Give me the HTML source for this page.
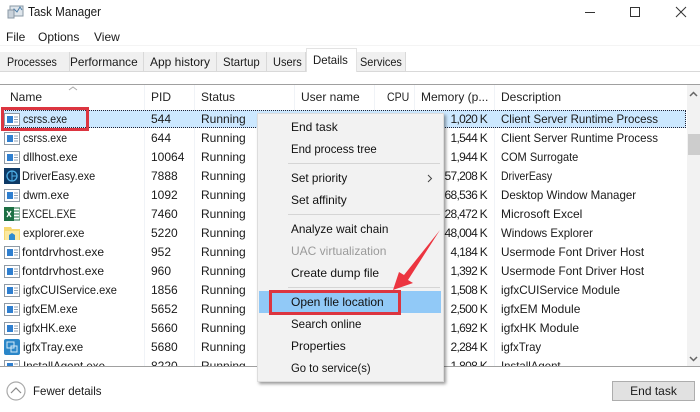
<!DOCTYPE html>
<html><head><meta charset="utf-8">
<style>
html,body{margin:0;padding:0;background:#fff}
#p{position:relative;width:700px;height:412px;overflow:hidden;background:#fff;font:12px "Liberation Sans",sans-serif;color:#1a1a1a}
#p div{position:absolute;white-space:nowrap;transform-origin:left center}
.t{line-height:16px;height:16px}
.tab{top:52px;height:19px;background:#f0f0f0;border-right:1px solid #d9d9d9;box-sizing:border-box}
.tl{top:54px;line-height:16px;height:16px}
.h{top:85px;height:24px;line-height:24px;color:#222}
.sep{top:85px;height:281px;width:1px;background:#f0f3f7}
.m{left:291px;line-height:16px;color:#111}
.ms{left:288px;width:152px;height:1px;background:#d5d5d5}
#p .r{text-align:right;width:60px;left:427px;letter-spacing:-.7px}
svg{position:absolute}
</style></head><body><div id="p">
<svg width="0" height="0" style="left:0;top:0"><symbol id="a" viewBox="0 0 16 13"><rect x=".5" y=".5" width="15" height="12" fill="#fff" stroke="#8f9aa5"/><rect x="3" y="3" width="6" height="7" fill="#2f7fd0"/><path d="M10 4h4M10 6.500h4M10 9h4" stroke="#8fa2b5"/></symbol></svg>
<svg style="left:7px;top:4px" width="17" height="16" viewBox="0 0 17 16"><rect x="3" y="2" width="13" height="10" fill="#dfe6ec" stroke="#8a98a5"/><path d="M4 9l3-4 3 3 3-5 2 3" fill="none" stroke="#4d7ea8"/><rect x="1" y="6" width="6" height="8" fill="#c9d2da" stroke="#8a98a5"/></svg>
<div class="t" style="left:28px;top:4px;font-size:12.5px;transform:scaleX(.93)">Task Manager</div>
<div style="left:585px;top:12px;width:10px;height:1px;background:#333"></div>
<div style="left:630px;top:7px;width:8px;height:8px;border:1px solid #333"></div>
<svg style="left:675px;top:6px" width="12" height="12"><path d="M1 1l10 10M11 1L1 11" stroke="#333" fill="none"/></svg>
<div class="t" style="left:6px;top:29px">File</div>
<div class="t" style="left:38px;top:29px">Options</div>
<div class="t" style="left:94px;top:29px">View</div>
<div style="left:0;top:45px;width:700px;height:1px;background:#f4f4f4"></div>
<div style="left:0;top:71px;width:700px;height:1px;background:#d9d9d9"></div>
<div class="tab" style="left:0;width:70px"></div>
<div class="tab" style="left:70px;width:74px"></div>
<div class="tab" style="left:144px;width:73px"></div>
<div class="tab" style="left:217px;width:50px"></div>
<div class="tab" style="left:267px;width:39px"></div>
<div class="tab" style="left:357px;width:49px"></div>
<div style="left:306px;top:48px;width:51px;height:24px;background:#fff;border:1px solid #e2e2e2;border-bottom:0;box-sizing:border-box"></div>
<div class="tl" style="left:7px;transform:scaleX(.89)">Processes</div>
<div class="tl" style="left:70px;transform:scaleX(.985)">Performance</div>
<div class="tl" style="left:150px">App history</div>
<div class="tl" style="left:223px;transform:scaleX(.95)">Startup</div>
<div class="tl" style="left:273px;transform:scaleX(.92)">Users</div>
<div class="tl" style="left:313px;top:52px;transform:scaleX(.95)">Details</div>
<div class="tl" style="left:360px;transform:scaleX(.91)">Services</div>
<div style="left:0;top:84px;width:700px;height:1px;background:#a0a0a0"></div>
<div style="left:0;top:366px;width:700px;height:1px;background:#a0a0a0"></div>
<div class="sep" style="left:144px"></div><div class="sep" style="left:194px"></div><div class="sep" style="left:294px"></div><div class="sep" style="left:374px"></div><div class="sep" style="left:414px"></div><div class="sep" style="left:494px"></div>
<svg style="left:68px;top:85px" width="10" height="6"><path d="M1 5l4-3 4 3" fill="none" stroke="#aaa"/></svg>
<div class="h" style="left:10px">Name</div><div class="h" style="left:151px">PID</div><div class="h" style="left:201px">Status</div><div class="h" style="left:301px">User name</div><div class="h" style="left:387px;transform:scaleX(.88)">CPU</div><div class="h" style="left:421px">Memory (p...</div><div class="h" style="left:501px">Description</div>
<div style="left:1px;top:110px;width:685px;height:18px;background:#cce8ff;border:1px dotted #223;box-sizing:border-box"></div>
<div style="left:687px;top:85px;width:13px;height:281px;background:#f2f2f2"></div>
<div style="left:688px;top:134px;width:12px;height:21px;background:#cdcdcd"></div>
<svg style="left:689px;top:91px" width="9" height="7"><path d="M1 5l3.500-3.500 3.500 3.500" fill="none" stroke="#666" stroke-width="1.500"/></svg>
<svg style="left:689px;top:355px" width="9" height="7"><path d="M1 2l3.500 3.500 3.500-3.500" fill="none" stroke="#666" stroke-width="1.500"/></svg>
<div style="left:0;top:109px;width:686px;height:257px;overflow:hidden;background:transparent">
<svg style="left:4px;top:4px" width="16" height="13"><use href="#a"/></svg>
<svg style="left:4px;top:23px" width="16" height="13"><use href="#a"/></svg>
<svg style="left:4px;top:42px" width="16" height="13"><use href="#a"/></svg>
<svg style="left:4px;top:59px" width="16" height="16"><rect width="16" height="16" fill="#0e3a66"/><circle cx="8" cy="8" r="5" fill="none" stroke="#4fb0e8" stroke-width="1.300"/><path d="M8 3v10M8 8h5" stroke="#4fb0e8"/></svg>
<svg style="left:4px;top:80px" width="16" height="13"><use href="#a"/></svg>
<svg style="left:4px;top:97px" width="16" height="16"><rect x="7" y="2" width="9" height="12" fill="#fff" stroke="#1d7044"/><path d="M10 5h5M10 8h5M10 11h5" stroke="#1d7044"/><rect y="1" width="10" height="14" fill="#1d7044"/><path d="M3 5l4 6M7 5l-4 6" stroke="#fff" stroke-width="1.300"/></svg>
<svg style="left:4px;top:116px" width="16" height="16"><path d="M0 2h7l1 2h8v11H0z" fill="#f5d76e"/><rect x="1" y="6" width="14" height="9" fill="#fbe9a0"/><path d="M5 15v-5l3-2 3 2v5z" fill="#2e8bd0"/></svg>
<svg style="left:4px;top:137px" width="16" height="13"><use href="#a"/></svg>
<svg style="left:4px;top:156px" width="16" height="13"><use href="#a"/></svg>
<svg style="left:4px;top:175px" width="16" height="13"><use href="#a"/></svg>
<svg style="left:4px;top:194px" width="16" height="13"><use href="#a"/></svg>
<svg style="left:4px;top:213px" width="16" height="13"><use href="#a"/></svg>
<svg style="left:4px;top:230px" width="16" height="16"><rect width="16" height="16" rx="2" fill="#2a86c8"/><rect x="3" y="3" width="7" height="6" fill="none" stroke="#cfe8f8"/><rect x="7" y="7" width="6" height="6" fill="none" stroke="#cfe8f8"/></svg>
<svg style="left:4px;top:251px" width="16" height="13"><use href="#a"/></svg>
<div class="t" style="left:23px;top:2px;transform:scaleX(.87)">csrss.exe</div><div class="t" style="left:151px;top:2px">544</div><div class="t" style="left:201px;top:2px">Running</div><div class="t r" style="top:2px">1,020 K</div><div class="t" style="left:501px;top:2px;transform:scaleX(.957)">Client Server Runtime Process</div>
<div class="t" style="left:23px;top:21px;transform:scaleX(.87)">csrss.exe</div><div class="t" style="left:151px;top:21px">644</div><div class="t" style="left:201px;top:21px">Running</div><div class="t r" style="top:21px">1,544 K</div><div class="t" style="left:501px;top:21px;transform:scaleX(.957)">Client Server Runtime Process</div>
<div class="t" style="left:23px;top:40px;transform:scaleX(.95)">dllhost.exe</div><div class="t" style="left:151px;top:40px">10064</div><div class="t" style="left:201px;top:40px">Running</div><div class="t r" style="top:40px">1,944 K</div><div class="t" style="left:501px;top:40px;transform:scaleX(.92)">COM Surrogate</div>
<div class="t" style="left:22px;top:59px;transform:scaleX(.91)">DriverEasy.exe</div><div class="t" style="left:151px;top:59px">7888</div><div class="t" style="left:201px;top:59px">Running</div><div class="t r" style="top:59px">57,208 K</div><div class="t" style="left:501px;top:59px;transform:scaleX(.87)">DriverEasy</div>
<div class="t" style="left:23px;top:78px;transform:scaleX(.96)">dwm.exe</div><div class="t" style="left:151px;top:78px">1092</div><div class="t" style="left:201px;top:78px">Running</div><div class="t r" style="top:78px">68,536 K</div><div class="t" style="left:501px;top:78px;transform:scaleX(.96)">Desktop Window Manager</div>
<div class="t" style="left:22px;top:97px;transform:scaleX(.81)">EXCEL.EXE</div><div class="t" style="left:151px;top:97px">7460</div><div class="t" style="left:201px;top:97px">Running</div><div class="t r" style="top:97px">28,472 K</div><div class="t" style="left:501px;top:97px">Microsoft Excel</div>
<div class="t" style="left:23px;top:116px;transform:scaleX(.94)">explorer.exe</div><div class="t" style="left:151px;top:116px">5220</div><div class="t" style="left:201px;top:116px">Running</div><div class="t r" style="top:116px">48,004 K</div><div class="t" style="left:501px;top:116px;transform:scaleX(.95)">Windows Explorer</div>
<div class="t" style="left:22px;top:135px">fontdrvhost.exe</div><div class="t" style="left:151px;top:135px">952</div><div class="t" style="left:201px;top:135px">Running</div><div class="t r" style="top:135px">4,184 K</div><div class="t" style="left:501px;top:135px;transform:scaleX(.98)">Usermode Font Driver Host</div>
<div class="t" style="left:22px;top:154px">fontdrvhost.exe</div><div class="t" style="left:151px;top:154px">960</div><div class="t" style="left:201px;top:154px">Running</div><div class="t r" style="top:154px">1,392 K</div><div class="t" style="left:501px;top:154px;transform:scaleX(.98)">Usermode Font Driver Host</div>
<div class="t" style="left:23px;top:173px;transform:scaleX(.92)">igfxCUIService.exe</div><div class="t" style="left:151px;top:173px">1856</div><div class="t" style="left:201px;top:173px">Running</div><div class="t r" style="top:173px">1,508 K</div><div class="t" style="left:501px;top:173px;transform:scaleX(.975)">igfxCUIService Module</div>
<div class="t" style="left:23px;top:192px;transform:scaleX(.92)">igfxEM.exe</div><div class="t" style="left:151px;top:192px">5652</div><div class="t" style="left:201px;top:192px">Running</div><div class="t r" style="top:192px">2,500 K</div><div class="t" style="left:501px;top:192px">igfxEM Module</div>
<div class="t" style="left:23px;top:211px;transform:scaleX(.92)">igfxHK.exe</div><div class="t" style="left:151px;top:211px">5660</div><div class="t" style="left:201px;top:211px">Running</div><div class="t r" style="top:211px">1,692 K</div><div class="t" style="left:501px;top:211px">igfxHK Module</div>
<div class="t" style="left:23px;top:230px;transform:scaleX(.94)">igfxTray.exe</div><div class="t" style="left:151px;top:230px">5680</div><div class="t" style="left:201px;top:230px">Running</div><div class="t r" style="top:230px">2,284 K</div><div class="t" style="left:501px;top:230px;transform:scaleX(.95)">igfxTray</div>
<div class="t" style="left:23px;top:249px;transform:scaleX(.96)">InstallAgent.exe</div><div class="t" style="left:151px;top:249px">8220</div><div class="t" style="left:201px;top:249px">Running</div><div class="t r" style="top:249px">1,808 K</div><div class="t" style="left:501px;top:249px;transform:scaleX(.95)">InstallAgent</div>
</div>
<div style="left:1px;top:107px;width:88px;height:24px;border:3px solid #dc3540;box-sizing:border-box"></div>
<div style="left:257px;top:113px;width:187px;height:269px;background:#f2f2f2;border:1px solid #ddd;box-sizing:border-box;box-shadow:2px 2px 3px rgba(0,0,0,.4)"></div>
<div class="m" style="top:119px">End task</div>
<div class="m" style="top:141px;transform:scaleX(.945)">End process tree</div>
<div class="ms" style="top:163px"></div>
<div class="m" style="top:170px;transform:scaleX(.98)">Set priority</div>
<svg style="left:427px;top:174px" width="6" height="9"><path d="M1 1l3.500 3.500L1 8" fill="none" stroke="#444"/></svg>
<div class="m" style="top:192px">Set affinity</div>
<div class="ms" style="top:214px"></div>
<div class="m" style="top:221px;transform:scaleX(.98)">Analyze wait chain</div>
<div class="m" style="top:243px;color:#9a9a9a">UAC virtualization</div>
<div class="m" style="top:265px">Create dump file</div>
<div class="ms" style="top:287px"></div>
<div style="left:259px;top:291px;width:182px;height:22px;background:#91c9f7"></div>
<div class="m" style="top:294px">Open file location</div>
<div class="m" style="top:316px;transform:scaleX(.96)">Search online</div>
<div class="m" style="top:338px">Properties</div>
<div class="m" style="top:360px;transform:scaleX(.94)">Go to service(s)</div>
<div style="left:269px;top:290px;width:132px;height:25px;border:3px solid #dc3540;box-sizing:border-box"></div>
<svg style="left:385px;top:225px" width="60" height="70"><path d="M55 5L23 55l5 3L8 65l6-18 5 3z" fill="#ec3540"/></svg>
<svg style="left:6px;top:381px" width="20" height="20"><circle cx="10" cy="10" r="9" fill="#fff" stroke="#aaa" stroke-width="1.200"/><path d="M5 12l5-5 5 5" fill="none" stroke="#888" stroke-width="1.200"/></svg>
<div class="t" style="left:33px;top:383px;transform:scaleX(.96)">Fewer details</div>
<div style="left:612px;top:381px;width:83px;height:20px;background:#e1e1e1;border:1px solid #adadad;box-sizing:border-box;line-height:19px;text-align:center">End task</div>
</div></body></html>
